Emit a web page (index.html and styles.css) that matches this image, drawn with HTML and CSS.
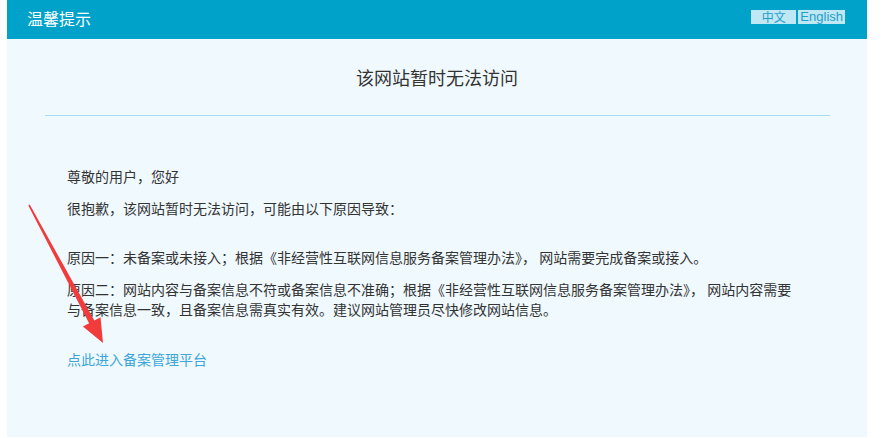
FILE: index.html
```html
<!DOCTYPE html>
<html lang="zh-CN">
<head>
    <meta charset="UTF-8">
    <meta name="viewport" content="width=device-width, initial-scale=1.0">
    <title>温馨提示</title>
    <link rel="stylesheet" href="styles.css">
</head>
<body>
    <div class="page">
        <div class="header">
            <span class="header-title">温馨提示</span>
            <div class="lang">
                <a class="lang-btn lang-cn" href="#">中文</a>
                <a class="lang-btn" href="#">English</a>
            </div>
        </div>

        <div class="content">
            <h1>该网站暂时无法访问</h1>
            <div class="divider"></div>

            <div class="text">
                <p class="greet">尊敬的用户，您好</p>
                <p class="intro">很抱歉，该网站暂时无法访问，可能由以下原因导致：</p>
                <p class="reason">原因一：未备案或未接入；根据《非经营性互联网信息服务备案管理办法》， 网站需要完成备案或接入。</p>
                <p class="reason">原因二：网站内容与备案信息不符或备案信息不准确；根据《非经营性互联网信息服务备案管理办法》， 网站内容需要与备案信息一致，且备案信息需真实有效。建议网站管理员尽快修改网站信息。</p>
                <a class="link" href="#">点此进入备案管理平台</a>
            </div>
        </div>

        <!-- 标注箭头 -->
        <svg class="arrow" width="120" height="160" viewBox="0 0 120 160">
            <polygon points="20.3,8.4 21.7,7.6 86.3,123.5 92.5,120.2 95,146 74.9,129.6 81.1,126.3" fill="#f23b3b"/>
        </svg>
    </div>
</body>
</html>
```

FILE: styles.css
```css
body {
    margin: 0;
    font-family: "Noto Sans CJK SC", "Noto Sans", sans-serif;
    background-color: #ffffff;
}
.page {
    position: relative;
    margin: 0 24px 0 7px;
    height: 437px;
    background-color: #eff9fe;
}
.header {
    display: flex;
    justify-content: space-between;
    height: 39px;
    padding: 0 22px 0 20px;
    background-color: #00a2ca;
}
.header-title {
    color: #ffffff;
    font-size: 16px;
    line-height: 37px;
}
.lang {
    display: flex;
    gap: 2px;
    margin-top: 10px;
    height: 14px;
}
.lang-btn {
    display: block;
    height: 14px;
    padding: 0 2px;
    background-color: #bfe7f4;
    color: #1d9fca;
    font-family: "Liberation Sans", "Noto Sans CJK SC", sans-serif;
    font-size: 13px;
    line-height: 14px;
    text-decoration: none;
}
.lang-cn {
    width: 41px;
    text-align: center;
    font-family: "Noto Sans CJK SC", sans-serif;
    font-size: 12px;
}
.content {
    padding-top: 26px;
}
h1 {
    margin: 0;
    font-size: 18px;
    font-weight: normal;
    line-height: 24px;
    color: #333333;
    text-align: center;
}
.divider {
    height: 1px;
    margin: 26px 37px 0 38px;
    background-color: #a3def1;
}
.text {
    padding: 50px 72px 0 60px;
    font-size: 14px;
    line-height: 20px;
    color: #333333;
}
.text p {
    margin: 0;
}
.intro {
    margin-top: 12px !important;
}
.reason {
    margin-top: 29px !important;
}
.reason + .reason {
    margin-top: 12px !important;
}
.link {
    display: block;
    margin-top: 30px;
    color: #3ea6d8;
    text-decoration: none;
}
.arrow {
    position: absolute;
    left: 1px;
    top: 197px;
}
```
